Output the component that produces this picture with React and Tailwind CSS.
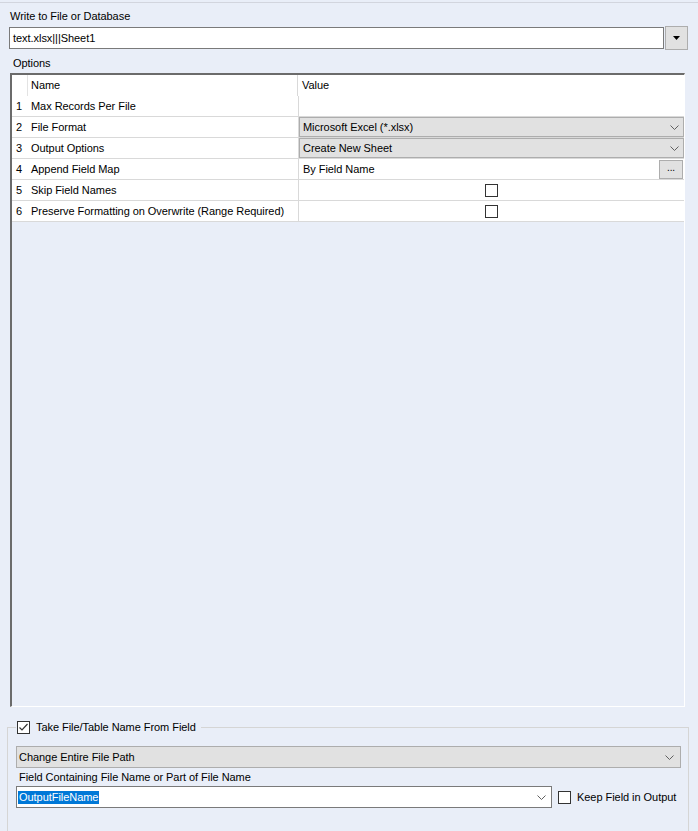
import React from "react";

const rows = [
  { n: 1, name: "Max Records Per File", kind: "empty" },
  { n: 2, name: "File Format", kind: "combo", value: "Microsoft Excel (*.xlsx)" },
  { n: 3, name: "Output Options", kind: "combo", value: "Create New Sheet" },
  { n: 4, name: "Append Field Map", kind: "button", value: "By Field Name" },
  { n: 5, name: "Skip Field Names", kind: "check" },
  { n: 6, name: "Preserve Formatting on Overwrite (Range Required)", kind: "check" },
];

function Chevron() {
  return (
    <svg width="9" height="5" viewBox="0 0 9 5" className="shrink-0">
      <path d="M0.5 0.5 L4.5 4.5 L8.5 0.5" fill="none" stroke="#606060" strokeWidth="1" />
    </svg>
  );
}

function CheckBox({ checked }) {
  return (
    <svg width="13" height="13" viewBox="0 0 13 13" className="shrink-0">
      <rect x="0.5" y="0.5" width="12" height="12" fill="#fff" stroke="#333" />
      {checked && (
        <polyline points="2.5,6.5 5,9 10.5,3" fill="none" stroke="#333" strokeWidth="1.2" />
      )}
    </svg>
  );
}

function ValueCell({ row }) {
  if (row.kind === "combo") {
    return (
      <div className="flex h-full w-full items-center justify-between border border-[#adadad] bg-[#e1e1e1] pl-[3px] pr-[4px]">
        <span>{row.value}</span>
        <Chevron />
      </div>
    );
  }
  if (row.kind === "button") {
    return (
      <div className="flex h-full items-center justify-between pl-[4px] pr-[1px]">
        <span>{row.value}</span>
        <div className="flex h-[19px] w-[24px] items-center justify-center border border-[#adadad] bg-[#e1e1e1] pb-[3px] text-[10px]">
          ...
        </div>
      </div>
    );
  }
  if (row.kind === "check") {
    return (
      <div className="flex h-full items-center justify-center">
        <CheckBox />
      </div>
    );
  }
  return null;
}

export default function App() {
  return (
    <div className="h-[831px] w-[698px] overflow-hidden bg-[#e9eef8] pt-[2px] font-['Liberation_Sans',Arial,sans-serif] text-[11px] leading-[13px] tracking-[-0.05px] text-black">
      <div className="h-px bg-[#d2d5de]" />

      <div className="ml-[10px] mt-[7px]">Write to File or Database</div>

      <div className="mt-[3px] flex h-[24px] items-center">
        <div className="ml-[9px] flex h-[22px] w-[655px] items-center border border-[#7a7a7a] bg-white pl-[3px]">
          text.xlsx|||Sheet1
        </div>
        <div className="ml-px flex h-[24px] w-[23px] items-center justify-center border border-[#adadad] bg-[#e1e1e1]">
          <svg width="7" height="4" viewBox="0 0 7 4">
            <path d="M0 0h7L3.5 4z" fill="#000" />
          </svg>
        </div>
      </div>

      <div className="ml-[13px] mt-[7px]">Options</div>

      <div className="ml-[10px] mt-[3px] h-[634px] w-[675px] border-b border-l-2 border-r border-t-2 border-b-white border-l-[#6b6b6b] border-r-white border-t-[#6b6b6b]">
        <div className="flex h-[21px] items-center bg-white">
          <div className="h-full w-[16px] border-r border-[#e3e3e3]" />
          <div className="flex h-full w-[270px] items-center border-r border-[#d9d9d9] pl-[3px]">Name</div>
          <div className="flex h-full flex-1 items-center pl-[4px]">Value</div>
        </div>
        {rows.map((row) => (
          <div key={row.n} className="flex h-[21px] border-b border-[#d9d9d9] bg-white">
            <div className="flex h-full w-[16px] items-center pl-[4px]">{row.n}</div>
            <div className="flex h-full w-[271px] items-center border-r border-[#d9d9d9] pl-[3px]">
              {row.name}
            </div>
            <div className="h-full flex-1">
              <ValueCell row={row} />
            </div>
          </div>
        ))}
      </div>

      <fieldset className="ml-[7px] mt-[13px] w-[682px] border border-b-0 border-[#d5d5d5] pl-[8px] pr-[7px] pb-[40px]">
        <legend className="flex h-[14px] items-center pl-px pr-[5px]">
          <CheckBox checked />
          <span className="ml-[6px]">Take File/Table Name From Field</span>
        </legend>

        <div className="mt-[12px] flex h-[22px] items-center justify-between border border-[#adadad] bg-[#e1e1e1] pl-[2px] pr-[6px]">
          <span>Change Entire File Path</span>
          <Chevron />
        </div>

        <div className="ml-[3px] mt-[3px]">Field Containing File Name or Part of File Name</div>

        <div className="mt-[2px] flex items-center">
          <div className="flex h-[22px] w-[536px] items-center justify-between border border-[#7a7a7a] bg-white pl-px pr-[5px]">
            <span className="bg-[#0078d7] px-px text-white">OutputFileName</span>
            <Chevron />
          </div>
          <div className="ml-[6px] flex items-center">
            <CheckBox />
            <span className="ml-[6px]">Keep Field in Output</span>
          </div>
        </div>
      </fieldset>
    </div>
  );
}
